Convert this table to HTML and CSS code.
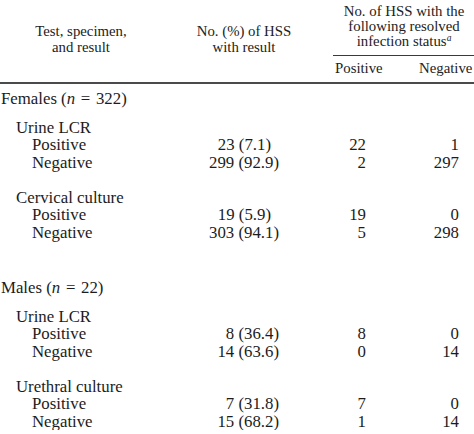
FILE: index.html
```html
<!DOCTYPE html>
<html lang="en">
<head>
<meta charset="utf-8">
<title>HSS test results</title>
<link rel="stylesheet" href="styles.css">
</head>
<body>
<table class="tbl">
  <colgroup>
    <col class="c1"><col class="c2"><col class="c3"><col class="c4">
  </colgroup>
  <thead>
    <tr>
      <th rowspan="2" class="h-test">Test, specimen,<br>and result</th>
      <th rowspan="2" class="h-no">No. (%) of HSS<br>with result</th>
      <th colspan="2" class="h-res">No. of HSS with the<br>following resolved<br>infection status<sup class="fn">a</sup></th>
    </tr>
    <tr>
      <th class="h-pos">Positive</th>
      <th class="h-neg">Negative</th>
    </tr>
  </thead>
  <tbody>
    <tr class="grp"><td class="lab">Females (<i>n</i> <span class="eq">=</span> 322)</td><td></td><td></td><td></td></tr>
    <tr class="sub"><td class="lab">Urine LCR</td><td></td><td></td><td></td></tr>
    <tr><td class="lab res">Positive</td><td class="n n1">23 (7.1)</td><td class="p">22</td><td class="q">1</td></tr>
    <tr><td class="lab res">Negative</td><td class="n">299 (92.9)</td><td class="p">2</td><td class="q">297</td></tr>
    <tr class="sub gap"><td class="lab">Cervical culture</td><td></td><td></td><td></td></tr>
    <tr><td class="lab res">Positive</td><td class="n n1">19 (5.9)</td><td class="p">19</td><td class="q">0</td></tr>
    <tr><td class="lab res">Negative</td><td class="n">303 (94.1)</td><td class="p">5</td><td class="q">298</td></tr>
    <tr class="grp male"><td class="lab">Males (<i>n</i> <span class="eq">=</span> 22)</td><td></td><td></td><td></td></tr>
    <tr class="sub"><td class="lab">Urine LCR</td><td></td><td></td><td></td></tr>
    <tr><td class="lab res">Positive</td><td class="n">8 (36.4)</td><td class="p">8</td><td class="q">0</td></tr>
    <tr><td class="lab res">Negative</td><td class="n">14 (63.6)</td><td class="p">0</td><td class="q">14</td></tr>
    <tr class="sub gap"><td class="lab">Urethral culture</td><td></td><td></td><td></td></tr>
    <tr><td class="lab res">Positive</td><td class="n">7 (31.8)</td><td class="p">7</td><td class="q">0</td></tr>
    <tr><td class="lab res">Negative</td><td class="n">15 (68.2)</td><td class="p">1</td><td class="q">14</td></tr>
  </tbody>
</table>
</body>
</html>
```
FILE: styles.css
```css
html, body {
  margin: 0;
  padding: 0;
  background: #ffffff;
  overflow: hidden;
}
body {
  font-family: "Liberation Serif", "Times New Roman", serif;
  color: #1c1c1c;
}
.tbl {
  border-collapse: separate;
  border-spacing: 0;
  table-layout: fixed;
  width: 483px;
  font-size: 16.8px;
}
.c1 { width: 162px; }
.c2 { width: 171px; }
.c3 { width: 70px; }
.c4 { width: 80px; }

.tbl th {
  font-weight: normal;
  font-size: 14.8px;
  padding: 0;
  color: #222;
}
.tbl .h-test, .tbl .h-no {
  line-height: 16px;
  text-align: center;
  vertical-align: middle;
  padding: 0 0 4px 0;
  border-bottom: 2px solid #4a4a4a;
}
.tbl .h-no { padding-right: 7px; }
.tbl .h-res {
  line-height: 15px;
  text-align: center;
  padding: 4px 8px 6px 0;
  border-bottom: 1px solid #3a3a3a;
}
.fn {
  font-style: italic;
  font-size: 9.5px;
  line-height: 0;
  vertical-align: 5px;
}
.tbl .h-pos, .tbl .h-neg {
  line-height: 16px;
  text-align: left;
  padding-top: 4px;
  padding-bottom: 6px;
  border-bottom: 2px solid #4a4a4a;
}
.tbl .h-pos { padding-left: 2px; }
.tbl .h-neg { padding-left: 16px; }

.tbl td {
  padding: 0;
  line-height: 17.5px;
  white-space: nowrap;
}
.eq { margin: 0 1.5px; }
.tbl .lab { text-align: left; padding-left: 1px; }
.tbl .sub .lab { padding-left: 16px; }
.tbl .lab.res { padding-left: 32px; }
.tbl .grp td { padding-top: 6px; padding-bottom: 11px; }
.tbl .grp.male td { padding-top: 38px; }
.tbl .sub.gap td { padding-top: 17.5px; }
.tbl .n { text-align: right; padding-right: 54px; }
.tbl .n.n1 { padding-right: 62px; }
.tbl .p { text-align: right; padding-right: 37px; }
.tbl .q { text-align: right; padding-right: 24px; }
```
